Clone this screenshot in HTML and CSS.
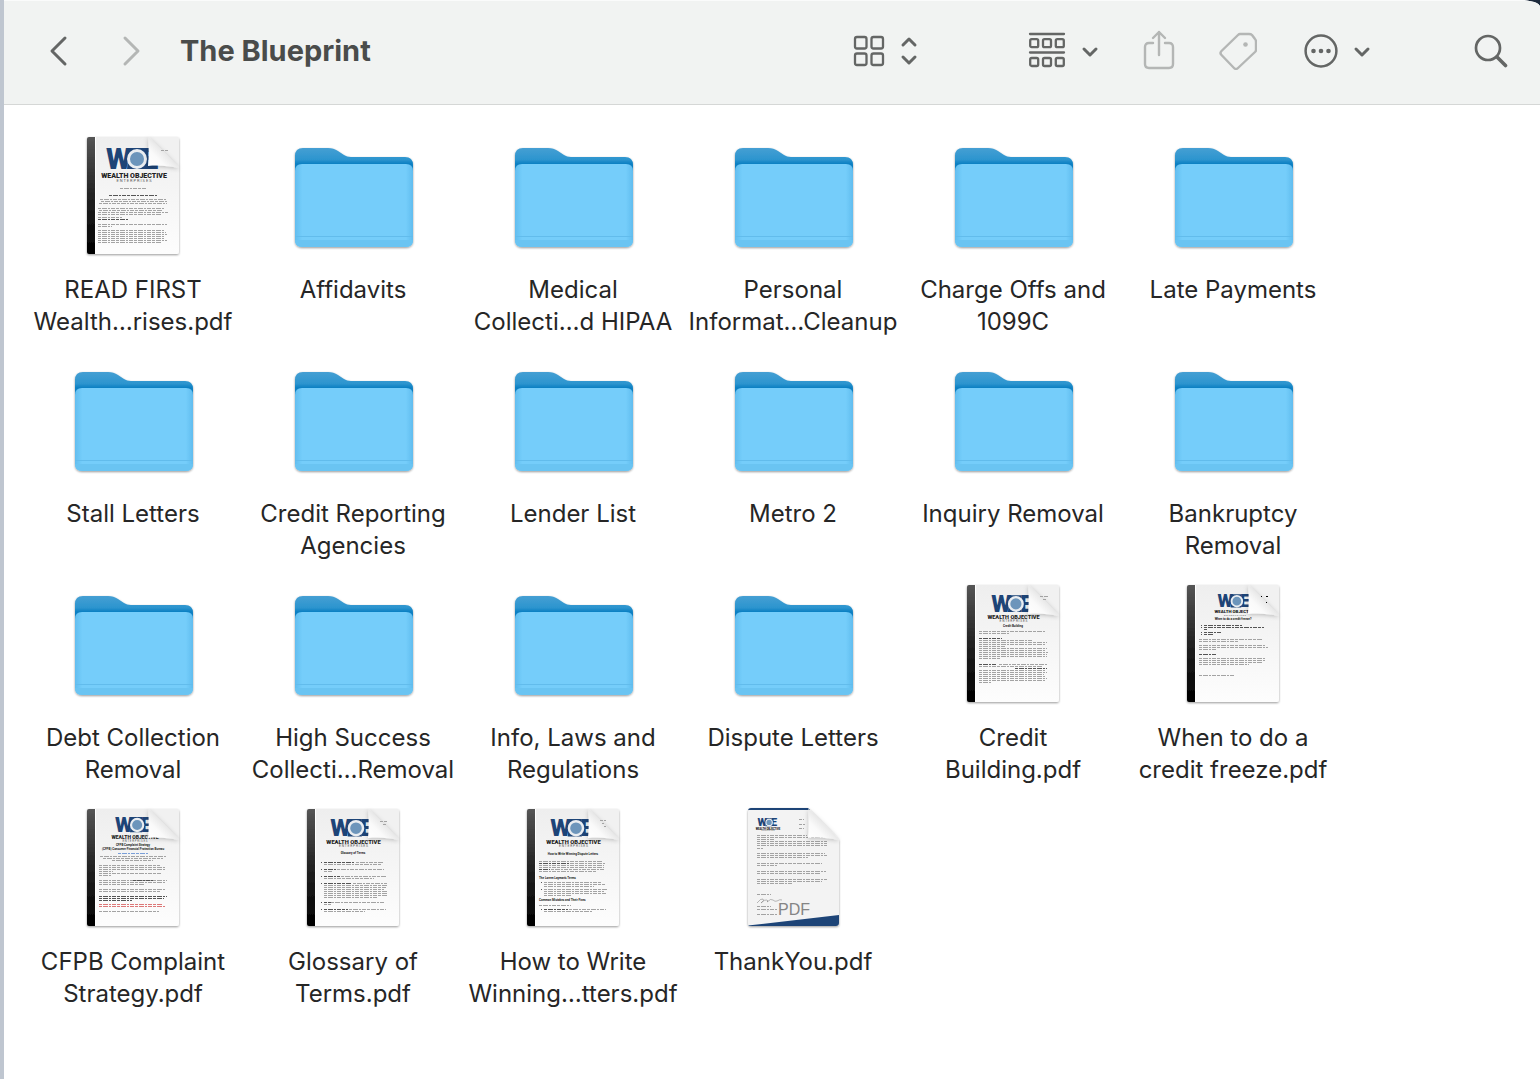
FILE: index.html
```
<!DOCTYPE html>
<html lang="en">
<head>
<meta charset="utf-8">
<meta name="viewport" content="width=device-width, initial-scale=1">
<title>The Blueprint</title>
<link rel="stylesheet" href="styles.css">
</head>
<body>
<svg class="defs" width="0" height="0" aria-hidden="true">
  <defs>
    <linearGradient id="g-back" x1="0" y1="0" x2="0" y2="1">
      <stop offset="0" stop-color="#459fd3"/><stop offset=".2" stop-color="#2d95cf"/><stop offset=".28" stop-color="#0d7fc2"/><stop offset="1" stop-color="#0d7fc2"/>
    </linearGradient>
    <linearGradient id="g-side" x1="0" y1="0" x2="1" y2="0">
      <stop offset="0" stop-color="#62bdef"/><stop offset=".06" stop-color="#74cdfa"/><stop offset=".94" stop-color="#74cdfa"/><stop offset="1" stop-color="#62bdef"/>
    </linearGradient>
    <linearGradient id="g-page" x1="0" y1="0" x2="0" y2="1">
      <stop offset="0" stop-color="#eeeeee"/><stop offset="1" stop-color="#fdfdfd"/>
    </linearGradient>
    <linearGradient id="g-spine" x1="0" y1="0" x2="0" y2="1">
      <stop offset="0" stop-color="#555"/><stop offset=".5" stop-color="#222"/><stop offset="1" stop-color="#000"/>
    </linearGradient>
    <linearGradient id="g-curl" x1="0" y1="1" x2=".7" y2=".3">
      <stop offset="0" stop-color="#ffffff"/><stop offset=".45" stop-color="#fafafa"/><stop offset="1" stop-color="#d8d8d8"/>
    </linearGradient>
    <filter id="f-drop" x="-10%" y="-10%" width="120%" height="125%">
      <feDropShadow dx="0" dy="1" stdDeviation="1" flood-color="#000" flood-opacity=".4"/>
    </filter>
    <filter id="f-curl" x="-20%" y="-20%" width="150%" height="150%">
      <feDropShadow dx="0" dy="1" stdDeviation="2" flood-color="#000" flood-opacity=".25"/>
    </filter>
  </defs>
  <symbol id="folder" viewBox="0 0 128 128">
    <g filter="url(#f-drop)">
      <path fill="url(#g-back)" d="M6 24q0-8 8-8h25c4 0 7 1 10 3l6 4c2 1 4 2 7 2h54q8 0 8 8v40H6z"/>
      <path fill="url(#g-side)" d="M6 39q0-7 7-7h104q7 0 7 7v69q0 7-7 7H13q-7 0-7-7z"/>
    </g>
    <path fill="none" stroke="#62bcec" d="M6 104.500h118"/>
    <path fill="#6ac4f2" d="M6 108h118q0 7-7 7H13q-7 0-7-7z"/>
  </symbol>
  <symbol id="logo" viewBox="0 0 64 36" overflow="visible">
    <text class="mark" x="4" y="21">W</text>
    <text class="mark" x="40" y="21">E</text>
    <path fill="#1d4477" d="M27 0h15v21H25z"/>
    <circle cx="35" cy="11" r="8.500" fill="#6c95bb" stroke="#e9edf1" stroke-width="3"/>
    <text class="wordmark" x="32" y="30" text-anchor="middle">WEALTH OBJECTIVE</text>
    <text class="submark" x="32" y="34" text-anchor="middle">E N T E R P R I S E S</text>
  </symbol>
  <symbol id="book" viewBox="0 0 128 128">
    <g filter="url(#f-drop)">
      <path fill="url(#g-page)" d="M20 5h88q2 0 2 3v111q0 3-2 3H20z"/>
      <path fill="url(#g-spine)" d="M20 5h6v117h-6q-2 0-2-2V7q0-2 2-2z"/>
    </g>
    <path d="M26.500 5v117" stroke="#fff" stroke-width="1"/>
  </symbol>
  <symbol id="curl" viewBox="0 0 128 128">
    <path filter="url(#f-curl)" fill="url(#g-curl)" d="M79 5c1 10 1 20 0 29 10-1 22 0 31 2C101 25 89 14 79 5z"/>
  </symbol>
  <symbol id="corner" viewBox="0 0 128 128">
    <path fill="#f1f1f1" d="M79 5h29q2 0 2 3v28z"/>
    <use href="#curl"/>
  </symbol>
</svg>

<div class="window">
  <header class="toolbar">
    <nav class="history" aria-label="History">
      <button type="button" aria-label="Back"><svg width="20" height="32" viewBox="0 0 20 32"><path d="M17 3 4 16l13 13"/></svg></button>
      <button type="button" aria-label="Forward" class="dim"><svg width="20" height="32" viewBox="0 0 20 32"><path d="m3 3 13 13L3 29"/></svg></button>
    </nav>
    <h1>The Blueprint</h1>
    <div class="tools">
      <button type="button" aria-label="View as icons">
        <svg width="32" height="32" viewBox="0 0 32 32"><g stroke-width="2.300"><rect x="2" y="2" width="11.500" height="11.500" rx="2"/><rect x="18.500" y="2" width="11.500" height="11.500" rx="2"/><rect x="2" y="18.500" width="11.500" height="11.500" rx="2"/><rect x="18.500" y="18.500" width="11.500" height="11.500" rx="2"/></g></svg>
        <svg width="18" height="32" viewBox="0 0 18 32"><path stroke-width="3" d="m3 10 6-6 6 6M3 22l6 6 6-6"/></svg>
      </button>
      <div class="actions">
        <button type="button" aria-label="Group items">
          <svg width="38" height="38" viewBox="0 0 38 38"><g stroke-width="2.300"><path d="M2 2h34M2 20.500h34"/><rect x="2.200" y="7.200" width="8" height="8" rx="1.500"/><rect x="15" y="7.200" width="8" height="8" rx="1.500"/><rect x="27.800" y="7.200" width="8" height="8" rx="1.500"/><rect x="2.200" y="26" width="8" height="8" rx="1.500"/><rect x="15" y="26" width="8" height="8" rx="1.500"/><rect x="27.800" y="26" width="8" height="8" rx="1.500"/></g></svg>
          <svg width="18" height="14" viewBox="0 0 18 14"><path stroke-width="3" d="m3 5 6 6 6-6"/></svg>
        </button>
        <button type="button" aria-label="Share" class="dim"><svg width="32" height="44" viewBox="0 0 32 44"><path stroke-width="2.400" d="M10 14H6q-4 0-4 4v17q0 4 4 4h20q4 0 4-4V18q0-4-4-4h-4M16 26V3M10 9l6-6 6 6"/></svg></button>
        <button type="button" aria-label="Tags" class="dim"><svg width="38" height="38" viewBox="0 0 38 38"><path stroke-width="2.400" d="M21 2h9q2 0 3 1l3 4q1 1 1 3v8q0 1-1 2L19 36q-2 2-4 0L2.500 23q-2-2 0-4L19 3q1-1 2-1z"/><circle class="dot" cx="26.500" cy="12.500" r="2.300"/></svg></button>
        <button type="button" aria-label="More actions">
          <svg width="34" height="34" viewBox="0 0 34 34"><circle cx="17" cy="17" r="15.400" stroke-width="2.500"/><circle class="dot" cx="9.500" cy="17" r="2.300"/><circle class="dot" cx="17" cy="17" r="2.300"/><circle class="dot" cx="24.500" cy="17" r="2.300"/></svg>
          <svg width="18" height="14" viewBox="0 0 18 14"><path stroke-width="3" d="m3 5 6 6 6-6"/></svg>
        </button>
      </div>
      <button type="button" aria-label="Search"><svg width="34" height="34" viewBox="0 0 34 34"><circle cx="14" cy="14" r="12" stroke-width="2.700"/><path stroke-width="3.600" d="m23 23 8.500 8.500"/></svg></button>
    </div>
  </header>

  <main>
    <ul class="files">
      <li><svg class="icon" viewBox="0 0 128 128"><use href="#book"/>
        <use href="#logo" x="33" y="16" width="64" height="36"/>
        <path class="ln" d="M51 56.500h26M31 67.500h66M32 69.500h66M30 71.500h68M29 76.500h66M30 78.500h63M29 80.500h70M29 82.500h63M29 85.500h24M29 92.500h69M29 94.500h14M29 98.500h66M29 100.500h68M29 102.500h69M29 104.500h67M29 106.500h67M29 108.500h69M29 110.500h64"/>
        <path class="ln bold" d="M40 63.500h49M29 87.500h31"/>
        <use href="#corner"/><path class="ln" d="M92 18.500h7"/></svg><span>READ FIRST<br>Wealth…rises.pdf</span></li>
      <li><svg class="icon"><use href="#folder"/></svg><span>Affidavits</span></li>
      <li><svg class="icon"><use href="#folder"/></svg><span>Medical<br>Collecti…d HIPAA</span></li>
      <li><svg class="icon"><use href="#folder"/></svg><span>Personal<br>Informat…Cleanup</span></li>
      <li><svg class="icon"><use href="#folder"/></svg><span>Charge Offs and<br>1099C</span></li>
      <li><svg class="icon"><use href="#folder"/></svg><span>Late Payments</span></li>
      <li><svg class="icon"><use href="#folder"/></svg><span>Stall Letters</span></li>
      <li><svg class="icon"><use href="#folder"/></svg><span>Credit Reporting<br>Agencies</span></li>
      <li><svg class="icon"><use href="#folder"/></svg><span>Lender List</span></li>
      <li><svg class="icon"><use href="#folder"/></svg><span>Metro 2</span></li>
      <li><svg class="icon"><use href="#folder"/></svg><span>Inquiry Removal</span></li>
      <li><svg class="icon"><use href="#folder"/></svg><span>Bankruptcy<br>Removal</span></li>
      <li><svg class="icon"><use href="#folder"/></svg><span>Debt Collection<br>Removal</span></li>
      <li><svg class="icon"><use href="#folder"/></svg><span>High Success<br>Collecti…Removal</span></li>
      <li><svg class="icon"><use href="#folder"/></svg><span>Info, Laws and<br>Regulations</span></li>
      <li><svg class="icon"><use href="#folder"/></svg><span>Dispute Letters</span></li>
      <li><svg class="icon" viewBox="0 0 128 128"><use href="#book"/>
        <use href="#logo" x="39" y="15" width="51" height="29"/>
        <path class="ln" d="M30 51.500h67M30 53.500h30M30 60.500h53M30 62.500h68M30 64.500h67M30 66.500h26M30 68.500h68M30 70.500h67M30 72.500h69M30 74.500h68M30 76.500h68M30 78.500h22M50 84.500h48M30 86.500h63M30 90.500h67M30 92.500h68M30 94.500h65M30 96.500h67M30 98.500h68M30 100.500h66M30 102.500h12"/>
        <path class="ln bold" d="M30 58.500h23M30 84.500h17M66 88.500h32"/>
        <text class="head" x="64" y="47" text-anchor="middle">Credit Building</text>
        <use href="#corner"/><path class="ln" d="M91 16.500h8M94 19.500h4"/></svg><span>Credit<br>Building.pdf</span></li>
      <li><svg class="icon" viewBox="0 0 128 128"><use href="#book"/>
        <use href="#logo" x="46" y="14" width="40" height="23"/>
        <path class="ln" d="M30 59.500h63M30 61.500h40M30 65.500h66M30 67.500h69M30 69.500h18M30 78.500h66M30 80.500h67M30 82.500h64M30 84.500h50M30 95.500h35"/>
        <path class="ln bold" d="M32 45.500h1M35 45.500h38M32 47.500h1M35 47.500h60M35 49.500h4M32 52.500h1M35 52.500h18M32 54.500h1M35 54.500h9M30 74.500h18"/>
        <text class="head" x="64" y="40" text-anchor="middle">When to do a credit freeze?</text>
        <use href="#corner"/><path fill="none" stroke="#000" d="M92 16.500h1M97 16.500h2M97 22.500h1"/></svg><span>When to do a<br>credit freeze.pdf</span></li>
      <li><svg class="icon" viewBox="0 0 128 128"><use href="#book"/>
        <use href="#logo" x="43" y="13" width="46" height="26"/>
        <path class="ln" d="M31 52.500h66M34 54.500h60M43 56.500h41M30 61.500h61M30 63.500h67M30 65.500h66M30 67.500h14M30 69.500h62M30 71.500h12M30 76.500h68M30 78.500h67M30 80.500h45M30 85.500h66M30 87.500h61M30 107.500h60"/>
        <path class="ln bold" d="M30 92.500h68M30 94.500h65M30 96.500h33M64 76.500h20"/>
        <path class="ln red" d="M30 100.500h63M30 102.500h67"/><path class="ln link" d="M49 49.500h31"/>
        <text class="head" x="64" y="42" text-anchor="middle">CFPB Complaint Strategy</text>
        <text class="head" x="64" y="46" text-anchor="middle">(CFPB) Consumer Financial Protection Bureau</text>
        <use href="#corner"/></svg><span>CFPB Complaint<br>Strategy.pdf</span></li>
      <li><svg class="icon" viewBox="0 0 128 128"><use href="#book"/>
        <use href="#logo" x="38" y="15" width="53" height="30"/>
        <path class="ln" d="M67 58.500h27M35 60.500h58M48 65.500h47M35 67.500h8M52 72.500h45M35 74.500h50M64 79.500h34M35 81.500h63M35 83.500h62M35 85.500h60M35 87.500h63M35 89.500h63M35 91.500h64M35 93.500h54M42 98.500h53M35 100.500h7M60 105.500h37M35 107.500h41"/>
        <path class="ln bold" d="M32 58.500h1M35 58.500h30M32 65.500h1M35 65.500h12M32 72.500h1M35 72.500h16M32 79.500h1M35 79.500h28M32 98.500h1M35 98.500h7M32 105.500h1M35 105.500h24"/>
        <text class="head" x="64" y="50" text-anchor="middle">Glossary of Terms</text>
        <use href="#corner"/><path class="ln" d="M91 17.500h7M94 20.500h3"/></svg><span>Glossary of<br>Terms.pdf</span></li>
      <li><svg class="icon" viewBox="0 0 128 128"><use href="#book"/>
        <use href="#logo" x="38" y="15" width="53" height="30"/>
        <path class="ln" d="M30 57.500h64M30 59.500h66M30 61.500h65M30 63.500h65M42 65.500h54M30 67.500h58M35 78.500h58M35 80.500h61M35 82.500h50M35 85.500h63M35 87.500h60M35 89.500h62M35 91.500h28M30 101.500h32M60 105.500h37M35 107.500h48"/>
        <path class="ln bold" d="M30 59.500h30M30 65.500h11M32 78.500h1M32 85.500h1M32 105.500h1M35 105.500h24"/>
        <text class="head" x="64" y="51" text-anchor="middle">How to Write Winning Dispute Letters</text>
        <text class="head" x="30" y="75">The Lorem Layman's Terms</text>
        <text class="head" x="30" y="97">Common Mistakes and Their Fixes</text>
        <use href="#corner"/><path class="ln" d="M91 16.500h6M93 19.500h2M95 22.500h2"/></svg><span>How to Write<br>Winning…tters.pdf</span></li>
      <li><svg class="icon" viewBox="0 0 128 128">
        <path filter="url(#f-drop)" fill="#f3f3f3" d="M23 4h56l31 32v83q0 3-3 3H22q-3 0-3-3V8q0-4 4-4z"/>
        <path fill="#1d4477" d="M19 7q0-3 3-3h57l2 2H19zM19 121.500 110 111v8q0 3-3 3H22q-2 0-3-.5z"/>
        <use href="#logo" x="27" y="14" width="24" height="14"/>
        <path class="ln" d="M28 31.500h50M28 33.500h68M28 35.500h18M28 37.500h70M28 39.500h70M28 41.500h70M28 44.500h6M28 49.500h68M28 51.500h70M28 53.500h51M28 59.500h65M28 61.500h20M28 67.500h69M28 69.500h63M28 75.500h70M28 77.500h65M28 79.500h36M28 90.500h14M28 102.500h14M28 105.500h20M28 110.500h20M70 15.500h5M70 20.500h6M70 24.500h5"/>
        <path fill="none" stroke="#777" stroke-width=".5" d="M28 99q4-5 6-4t-2 4q4-4 6-3t0 2q4-4 6-2t4 1q3-2 5-1"/>
        <text class="type" x="65" y="111" text-anchor="middle">PDF</text>
        <use href="#curl"/></svg><span>ThankYou.pdf</span></li>
    </ul>
  </main>
</div>
</body>
</html>
```
FILE: styles.css
```
* { box-sizing: border-box; }

body {
  margin: 0;
  min-height: 100vh;
  padding-left: 4px;
  background: linear-gradient(90deg, #bfc6d0 50%, #1c2a3c 50%);
  font-family: Inter, "Liberation Sans", sans-serif;
  color: #262626;
}

.defs { position: absolute; }

.window {
  min-height: 100vh;
  background: #fff;
  border-radius: 0 20px 0 0 / 0 7px 0 0;
  overflow: hidden;
}

.toolbar {
  display: flex;
  align-items: center;
  height: 105px;
  padding: 0 32px 4px 44px;
  background: #f1f3f2;
  border-top: 1px solid #fafbfb;
  border-bottom: 1px solid #d5d7d6;
}

.history { display: flex; gap: 54px; }

h1 {
  margin: 0 0 0 38px;
  font-size: 29px;
  line-height: 36px;
  font-weight: 700;
  color: #4a4c4b;
  white-space: nowrap;
}

button {
  display: flex;
  align-items: center;
  gap: 15px;
  padding: 0;
  border: 0;
  background: none;
  color: #646665;
}

button.dim { color: #b4b6b5; }

button svg {
  display: block;
  fill: none;
  stroke: currentColor;
  stroke-width: 3;
  stroke-linecap: round;
  stroke-linejoin: round;
}

button .dot { fill: currentColor; stroke: none; }

.tools {
  display: flex;
  align-items: center;
  gap: 103px;
  margin-left: auto;
}

.tools > button:first-child { margin-right: 7px; }

.actions {
  display: flex;
  align-items: center;
  gap: 44px;
}

.actions > :last-child { margin-left: 3px; }

.files {
  display: grid;
  grid-template-columns: repeat(auto-fill, 220px);
  grid-auto-rows: 206px;
  row-gap: 18px;
  margin: 0;
  padding: 27px 0 27px 19px;
  list-style: none;
}

.files li {
  display: flex;
  flex-direction: column;
  align-items: center;
  gap: 14px;
}

.files span {
  font-size: 24px;
  line-height: 32px;
  text-align: center;
  white-space: nowrap;
}

.icon { display: block; width: 128px; height: 128px; }

.mark { font: 900 29px Roboto, sans-serif; fill: #1d4477; }
.wordmark { font: 900 7px Roboto, sans-serif; fill: #222; }
.submark { font: 400 4px Roboto, sans-serif; fill: #555; }
.head { font: 700 3px Roboto, sans-serif; fill: #222; }
.type { font: 400 16px "Liberation Sans", sans-serif; fill: #858585; }

.ln {
  fill: none;
  stroke: #a3a3a3;
  stroke-dasharray: 3 1 5 1 2 1 4 1;
}
.ln.bold { stroke: #555; }
.ln.red { stroke: #d77; }
.ln.link { stroke: #7a9fd8; }
```
